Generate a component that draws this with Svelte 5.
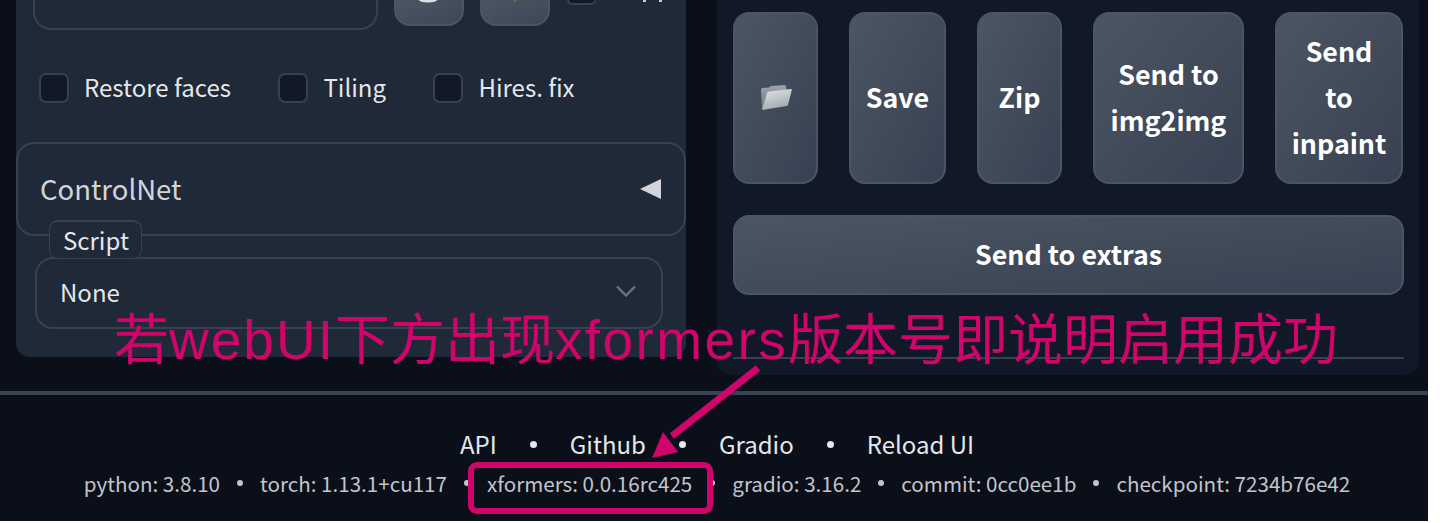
<script>
	const outputButtons = ['Save', 'Zip', 'Send to img2img', 'Send to inpaint'];
	const links = ['API', 'Github', 'Gradio', 'Reload UI'];
	const versions = [
		'python: 3.8.10',
		'torch: 1.13.1+cu117',
		'xformers: 0.0.16rc425',
		'gradio: 3.16.2',
		'commit: 0cc0ee1b',
		'checkpoint: 7234b76e42'
	];
	const options = [
		{ label: 'Restore faces', checked: false },
		{ label: 'Tiling', checked: false },
		{ label: 'Hires. fix', checked: false }
	];
</script>

<div class="page">
	<main class="columns">
		<section class="left-panel">
			<div class="seed-row">
				<div class="seed-input"></div>
				<button class="tool-btn">
					<svg width="20" height="3" viewBox="0 0 20 3"><ellipse cx="9" cy="0" rx="9" ry="2.600" fill="#dfe1dc" /></svg>
				</button>
				<button class="tool-btn">
					<svg width="6" height="2" viewBox="0 0 6 2"><circle cx="3" cy="0" r="1.600" fill="#2f8f3a" /></svg>
				</button>
				<div class="seed-check">
					<span class="box cut"></span>
					<span class="cut-label">
						<i></i><i></i>
					</span>
				</div>
			</div>

			<div class="options">
				{#each options as option}
					<label class="option">
						<span class="box"></span>
						<span class="option-text">{option.label}</span>
					</label>
				{/each}
			</div>

			<div class="accordion">
				<span>ControlNet</span>
				<span class="caret"></span>
			</div>

			<div class="script-field">
				<span class="field-label">Script</span>
				<div class="select">
					<span>None</span>
					<svg width="22" height="12" viewBox="0 0 22 12" fill="none" stroke="#6b7280" stroke-width="2.4">
						<path d="M2 1.500l9 9 9-9" />
					</svg>
				</div>
			</div>
		</section>

		<section class="right-panel">
			<div class="output-row">
				<button class="action">
					<svg width="34" height="30" viewBox="0 0 34 30">
						<defs>
							<linearGradient id="folderBack" x1="0" y1="0" x2="0" y2="1">
								<stop offset="0" stop-color="#9aa4ab" />
								<stop offset="1" stop-color="#6f7b84" />
							</linearGradient>
							<linearGradient id="folderFront" x1="0" y1="0" x2="0.4" y2="1">
								<stop offset="0" stop-color="#e4e6e6" />
								<stop offset="1" stop-color="#a3abb0" />
							</linearGradient>
						</defs>
						<path d="M2 7l1-1 7-.5 2-1.500 14-1 1 1 .5 4.500L8 27l-5 .8z" fill="url(#folderBack)" />
						<path d="M3 28l5-17q.5-1.500 2-1.600L32 7q1 0 .8 1L29 23q-.3 1-1.300 1.100z" fill="url(#folderFront)" />
					</svg>
				</button>
				{#each outputButtons as text}
					<button class="action">{text}</button>
				{/each}
			</div>
			<button class="action extras">Send to extras</button>
			<hr />
		</section>
	</main>

	<div class="separator"></div>

	<footer>
		<div class="links">
			{#each links as link, i}
				{#if i > 0}<span class="dot"></span>{/if}
				<span>{link}</span>
			{/each}
		</div>
		<div class="versions">
			{#each versions as version, i}
				{#if i > 0}<span class="dot"></span>{/if}
				<span>{version}</span>
			{/each}
		</div>
	</footer>

	<!-- annotation drawn on top of the screenshot -->
	<div class="note">若<span class="web">webUI</span>下方出现<span class="xf">xformers</span>版本号即说明启用成功</div>
	<svg class="arrow" width="130" height="110" viewBox="0 0 130 110">
		<path d="M118 4L32 72" stroke="#d0046a" stroke-width="7" fill="none" />
		<path d="M12 94L23 68 38 88z" fill="#d0046a" />
	</svg>
	<div class="highlight"></div>
</div>

<style>
	:global(body) {
		margin: 0;
		background: #fff;
	}

	.page {
		position: relative;
		width: 1428px;
		height: 521px;
		overflow: hidden;
		background: #0b0f19;
		font-family: 'Noto Sans CJK SC', 'Noto Sans', sans-serif;
		color: #e5e7eb;
	}

	.columns {
		display: flex;
		align-items: flex-start;
		gap: 31px;
		padding-left: 16px;
	}

	.left-panel {
		display: flex;
		flex-direction: column;
		width: 670px;
		height: 357px;
		box-sizing: border-box;
		background: #1f2937;
		border-radius: 0 0 14px 14px;
	}

	.seed-row {
		display: flex;
		align-items: flex-start;
		gap: 16px;
		height: 30px;
		padding-left: 17px;
	}

	.seed-input {
		width: 345px;
		height: 30px;
		box-sizing: border-box;
		border: 2px solid #374151;
		border-top: none;
		border-radius: 0 0 18px 18px;
		background: #1f2937;
	}

	.tool-btn {
		display: flex;
		justify-content: center;
		align-items: flex-start;
		width: 70px;
		height: 26px;
		padding: 0;
		border: 2px solid #4b5563;
		border-top: none;
		border-radius: 0 0 16px 16px;
		background: linear-gradient(to bottom right, #4b5563, #3d4757);
	}

	.seed-check {
		display: flex;
		align-items: flex-start;
		margin-left: 1px;
	}

	.box {
		display: block;
		flex: none;
		width: 30px;
		height: 30px;
		box-sizing: border-box;
		border: 2px solid #374151;
		border-radius: 7px;
		background: #111827;
	}

	.box.cut {
		width: 29px;
		height: 5px;
		border-top: none;
		border-radius: 0 0 7px 7px;
	}

	.cut-label {
		display: flex;
		gap: 13px;
		margin-left: 47px;
	}

	.cut-label i {
		display: block;
		width: 3px;
		height: 1.500px;
		background: #c9ccd1;
	}

	.options {
		display: flex;
		gap: 47.500px;
		margin-top: 43px;
		padding-left: 23px;
	}

	.option {
		display: flex;
		align-items: center;
		gap: 16px;
		height: 30px;
		font-size: 24px;
		line-height: 30px;
		color: #e5e7eb;
	}

	.option-text {
		margin: -2px 0 0 -1px;
	}

	.accordion {
		display: flex;
		justify-content: space-between;
		align-items: center;
		height: 94px;
		box-sizing: border-box;
		margin-top: 39px;
		padding: 0 23px 3px 22px;
		border: 2px solid #374151;
		border-radius: 18px;
		font-size: 27.500px;
		color: #d1d5db;
	}

	.caret {
		width: 0;
		height: 0;
		margin-top: 3px;
		border-style: solid;
		border-width: 10px 21px 10px 0;
		border-color: transparent #d1d5db transparent transparent;
	}

	.script-field {
		position: relative;
		margin: 21px 23px 0 19px;
	}

	.field-label {
		position: absolute;
		left: 14px;
		top: -37px;
		padding: 0 12px 0 13px;
		height: 39px;
		line-height: 35px;
		box-sizing: border-box;
		border: 1px solid #374151;
		border-top-width: 2px;
		border-radius: 9px;
		background: #1f2937;
		font-size: 24px;
		color: #e5e7eb;
	}

	.select {
		display: flex;
		justify-content: space-between;
		align-items: center;
		height: 72px;
		box-sizing: border-box;
		padding: 0 24px 4px 23px;
		border: 2px solid #374151;
		border-radius: 18px;
		font-size: 24px;
		color: #e5e7eb;
	}

	.right-panel {
		width: 702px;
		box-sizing: border-box;
		padding: 12px 15px 16px 16px;
		background: #111827;
		border-radius: 0 0 14px 14px;
	}

	.output-row {
		display: grid;
		grid-template-columns: 85px 97px 85px 151px 128px;
		gap: 31px;
		height: 172px;
	}

	.action {
		display: flex;
		justify-content: center;
		align-items: center;
		box-sizing: border-box;
		padding: 0 14px 3px;
		border: 2px solid #4b5563;
		border-radius: 16px;
		background: linear-gradient(to bottom right, #4b5563, #374151);
		font-family: inherit;
		font-size: 26.800px;
		font-weight: 600;
		line-height: 46px;
		color: #fff;
		text-align: center;
	}

	.extras {
		width: 100%;
		height: 80px;
		margin-top: 31px;
	}

	hr {
		height: 2px;
		margin: 62px 0 0;
		border: none;
		background: #374151;
	}

	.separator {
		height: 4px;
		margin-top: 16px;
		background: #374151;
	}

	footer {
		display: flex;
		flex-direction: column;
		align-items: center;
		padding-left: 6px;
	}

	.dot {
		flex: none;
		border-radius: 50%;
		background: currentColor;
	}

	.links {
		display: flex;
		align-items: center;
		gap: 33px;
		margin-top: 31px;
		font-size: 24px;
		line-height: 36px;
		color: #e5e7eb;
	}

	.links .dot {
		width: 7px;
		height: 7px;
	}

	.versions {
		display: flex;
		align-items: center;
		gap: 17px;
		margin-top: 6px;
		font-size: 20.600px;
		line-height: 30px;
		color: #c2c5cb;
	}

	.versions .dot {
		width: 6px;
		height: 6px;
	}

	.note {
		position: absolute;
		left: 114px;
		top: 302px;
		font-family: 'Liberation Sans', 'Noto Sans CJK SC', sans-serif;
		font-size: 55px;
		line-height: 76px;
		white-space: nowrap;
		color: #d0046a;
	}

	.web {
		letter-spacing: 2px;
	}

	.xf {
		letter-spacing: 2.400px;
	}

	.arrow {
		position: absolute;
		left: 640px;
		top: 364px;
	}

	.highlight {
		position: absolute;
		left: 468px;
		top: 462px;
		width: 245px;
		height: 52px;
		box-sizing: border-box;
		border: 6px solid #d0046a;
		border-radius: 9px;
	}
</style>
